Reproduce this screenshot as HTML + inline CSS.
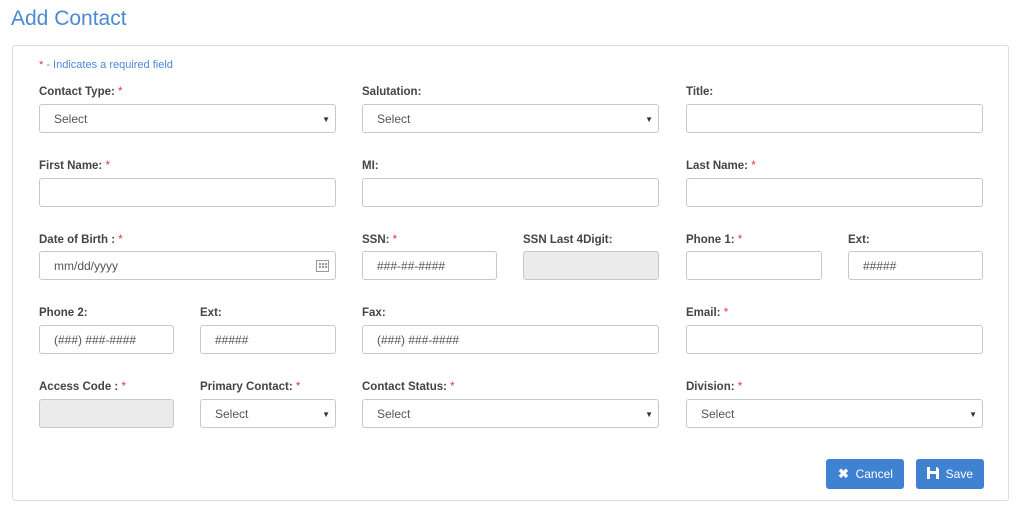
<!DOCTYPE html><html><head><style>
body{margin:0;width:1024px;height:513px;background:#fff;font-family:"Liberation Sans",sans-serif;position:relative;overflow:hidden}
.t{position:absolute;left:11px;top:7px;font-size:21px;color:#4a8ad4}
.p{position:absolute;left:12px;top:45px;width:997px;height:456px;border:1px solid #ddd;border-radius:3px;box-sizing:border-box}
.l{position:absolute;font-size:11.5px;font-weight:bold;color:#444;margin-top:2px}
.l b{color:#e33;font-weight:normal}
.i{position:absolute;height:29px;border:1px solid #c8c8c8;border-radius:3px;box-sizing:border-box;font-size:12px;color:#555;padding-left:14px;line-height:29px;background:#fff}
.d{background:#ebebeb}
.s::after{content:"▼";position:absolute;right:5px;top:0;font-size:8px;color:#333}
.btn{position:absolute;top:459px;height:30px;background:#3f82d2;border-radius:3px;color:#fff;font-size:12px;line-height:30px;box-sizing:border-box}
</style></head><body>
<div class="t">Add Contact</div>
<div class="p"></div>
<div style="position:absolute;left:39px;top:59px;font-size:11px;color:#4a8ad4"><span style="color:#e33">*</span> - Indicates a required field</div>

<div class="l" style="left:39px;top:84px">Contact Type: <b>*</b></div>
<div class="l" style="left:362px;top:84px">Salutation:</div>
<div class="l" style="left:686px;top:84px">Title:</div>
<div class="i s" style="left:39px;top:104px;width:297px">Select</div>
<div class="i s" style="left:362px;top:104px;width:297px">Select</div>
<div class="i" style="left:686px;top:104px;width:297px"></div>

<div class="l" style="left:39px;top:158px">First Name: <b>*</b></div>
<div class="l" style="left:362px;top:158px">MI:</div>
<div class="l" style="left:686px;top:158px">Last Name: <b>*</b></div>
<div class="i" style="left:39px;top:178px;width:297px"></div>
<div class="i" style="left:362px;top:178px;width:297px"></div>
<div class="i" style="left:686px;top:178px;width:297px"></div>

<div class="l" style="left:39px;top:232px">Date of Birth : <b>*</b></div>
<div class="l" style="left:362px;top:232px">SSN: <b>*</b></div>
<div class="l" style="left:523px;top:232px">SSN Last 4Digit:</div>
<div class="l" style="left:686px;top:232px">Phone 1: <b>*</b></div>
<div class="l" style="left:848px;top:232px">Ext:</div>
<div class="i" style="left:39px;top:251px;width:297px">mm/dd/yyyy<svg style="position:absolute;right:6px;top:7px" width="13" height="13" viewBox="0 0 13 13"><rect x=".5" y="1.5" width="12" height="11" fill="none" stroke="#999"/><g fill="#999"><rect x="3" y="4" width="2" height="2"/><rect x="6" y="4" width="2" height="2"/><rect x="9" y="4" width="2" height="2"/><rect x="3" y="7" width="2" height="2"/><rect x="6" y="7" width="2" height="2"/><rect x="9" y="7" width="2" height="2"/></g></svg></div>
<div class="i" style="left:362px;top:251px;width:135px">###-##-####</div>
<div class="i d" style="left:523px;top:251px;width:136px"></div>
<div class="i" style="left:686px;top:251px;width:136px"></div>
<div class="i" style="left:848px;top:251px;width:135px">#####</div>

<div class="l" style="left:39px;top:305px">Phone 2:</div>
<div class="l" style="left:200px;top:305px">Ext:</div>
<div class="l" style="left:362px;top:305px">Fax:</div>
<div class="l" style="left:686px;top:305px">Email: <b>*</b></div>
<div class="i" style="left:39px;top:325px;width:135px">(###) ###-####</div>
<div class="i" style="left:200px;top:325px;width:136px">#####</div>
<div class="i" style="left:362px;top:325px;width:297px">(###) ###-####</div>
<div class="i" style="left:686px;top:325px;width:297px"></div>

<div class="l" style="left:39px;top:379px">Access Code : <b>*</b></div>
<div class="l" style="left:200px;top:379px">Primary Contact: <b>*</b></div>
<div class="l" style="left:362px;top:379px">Contact Status: <b>*</b></div>
<div class="l" style="left:686px;top:379px">Division: <b>*</b></div>
<div class="i d" style="left:39px;top:399px;width:135px"></div>
<div class="i s" style="left:200px;top:399px;width:136px">Select</div>
<div class="i s" style="left:362px;top:399px;width:297px">Select</div>
<div class="i s" style="left:686px;top:399px;width:297px">Select</div>

<div class="btn" style="left:826px;width:78px;padding-left:12px"><span style="font-weight:bold;font-size:13px">✖</span>&nbsp; Cancel</div>
<div class="btn" style="left:916px;width:68px;padding-left:11px"><svg width="12" height="12" viewBox="0 0 12 12" style="vertical-align:-1px"><path d="M0 0H10L12 2V12H0Z M3 0V4H9V0Z M3 7V12H9V7Z" fill="#fff" fill-rule="evenodd"/></svg>&nbsp; Save</div>
</body></html>
